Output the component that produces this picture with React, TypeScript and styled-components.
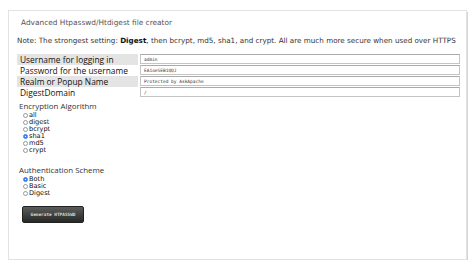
import React, { useState } from "react";
import styled, { createGlobalStyle } from "styled-components";

const GlobalStyle = createGlobalStyle`
  html, body {
    margin: 0;
    padding: 0;
    background: #fff;
  }
  body {
    font-family: "DejaVu Sans", Verdana, sans-serif;
    color: #222;
  }
`;

const Card = styled.div`
  box-sizing: border-box;
  margin: 10px 7px 0 8px;
  width: 459px;
  height: 250px;
  border: 1px solid #e2e2e2;
  box-shadow: 1px 2px 0 #d6d6d6;
  padding: 6px 8px 0 8px;
`;

const Title = styled.div`
  font-size: 7.4px;
  color: #555;
  line-height: 11px;
  padding-left: 4px;
`;

const Note = styled.div`
  font-size: 7.2px;
  color: #333;
  line-height: 10px;
  margin-top: 8px;
  white-space: nowrap;
  b {
    font-weight: bold;
    color: #111;
  }
`;

const Fields = styled.div`
  display: grid;
  grid-template-columns: 121px 1fr;
  margin-top: 8px;
  width: 442px;
`;

const Label = styled.div<{ $shaded: boolean }>`
  background: ${(p) => (p.$shaded ? "#e4e4e4" : "transparent")};
  font-family: "Open Sans", "DejaVu Sans", sans-serif;
  font-size: 8.4px;
  line-height: 11px;
  height: 11px;
  padding-left: 3px;
  color: #111;
  white-space: nowrap;
`;

const Input = styled.input`
  box-sizing: border-box;
  height: 10px;
  margin: 0 0 1px 2px;
  border: 1px solid #c4c4c4;
  border-top-color: #aaa;
  padding: 0 3px;
  font-family: "DejaVu Sans Mono", monospace;
  font-size: 4.5px;
  color: #333;
  outline: none;
  width: 320px;
`;

const Section = styled.div<{ $gap: number }>`
  margin-top: ${(p) => p.$gap}px;
  padding-left: 2px;
`;

const Heading = styled.div`
  font-family: "Open Sans", "DejaVu Sans", sans-serif;
  font-size: 7.9px;
  line-height: 10px;
  color: #333;
`;

const Options = styled.div`
  display: flex;
  flex-direction: column;
  padding-left: 4px;
  margin-top: 1px;
`;

const Option = styled.label`
  display: flex;
  align-items: center;
  height: 7px;
  font-size: 6.6px;
  line-height: 7px;
  color: #111;
`;

const Radio = styled.input`
  appearance: none;
  box-sizing: border-box;
  width: 5px;
  height: 5px;
  margin: 0 1px 0 0;
  border: 0.6px solid #999;
  border-radius: 50%;
  background: #fff;
  &:checked {
    background: radial-gradient(circle, #fff 0 0.6px, #3b82f6 1px);
    border-color: #3b7be0;
  }
`;

const Button = styled.button`
  display: block;
  margin: 9px 0 0 5px;
  width: 62px;
  height: 17px;
  border: 1px solid #222;
  border-radius: 2px;
  background: linear-gradient(#5a5d59, #262825);
  color: #ddd;
  font-family: "DejaVu Sans Mono", monospace;
  font-weight: bold;
  font-size: 4.4px;
  padding: 0;
`;

const fields = [
  { label: "Username for logging in", value: "admin" },
  { label: "Password for the username", value: "EA1oeSEB1QQJ" },
  { label: "Realm or Popup Name", value: "Protected by AskApache" },
  { label: "DigestDomain", value: "/" },
];

const algos = ["all", "digest", "bcrypt", "sha1", "md5", "crypt"];
const schemes = ["Both", "Basic", "Digest"];

export default function App() {
  const [algo, setAlgo] = useState("sha1");
  const [scheme, setScheme] = useState("Both");

  return (
    <>
      <GlobalStyle />
      <Card>
        <Title>Advanced Htpasswd/Htdigest file creator</Title>
        <Note>
          Note: The strongest setting: <b>Digest</b>, then bcrypt, md5, sha1, and crypt. All are much
          more secure when used over HTTPS
        </Note>
        <Fields>
          {fields.map((f, i) => (
            <React.Fragment key={f.label}>
              <Label $shaded={i % 2 === 0}>{f.label}</Label>
              <Input defaultValue={f.value} />
            </React.Fragment>
          ))}
        </Fields>
        <Section $gap={3}>
          <Heading>Encryption Algorithm</Heading>
          <Options>
            {algos.map((a) => (
              <Option key={a}>
                <Radio type="radio" name="algo" checked={algo === a} onChange={() => setAlgo(a)} />
                {a}
              </Option>
            ))}
          </Options>
        </Section>
        <Section $gap={11}>
          <Heading>Authentication Scheme</Heading>
          <Options>
            {schemes.map((s) => (
              <Option key={s}>
                <Radio type="radio" name="scheme" checked={scheme === s} onChange={() => setScheme(s)} />
                {s}
              </Option>
            ))}
          </Options>
        </Section>
        <Button>Generate HTPASSWD</Button>
      </Card>
    </>
  );
}
